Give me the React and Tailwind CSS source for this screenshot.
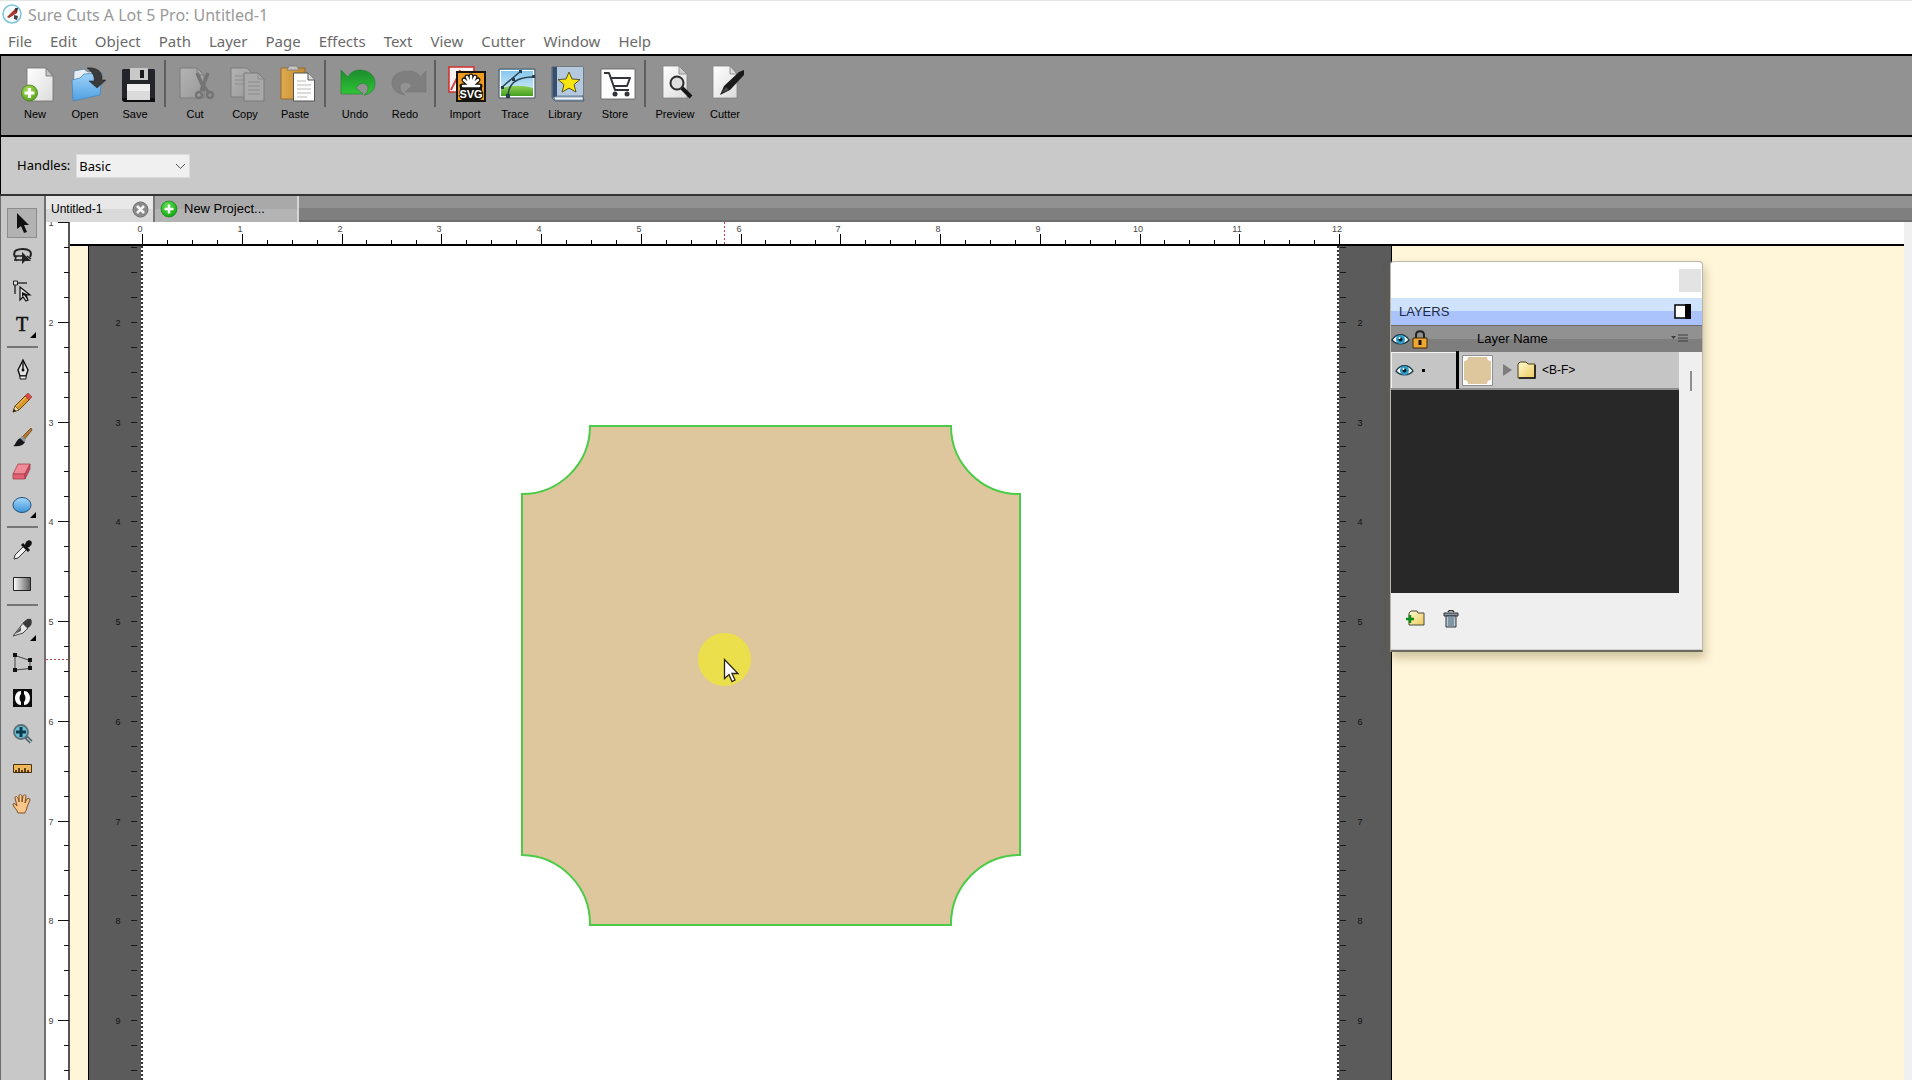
const menus = ["File", "Edit", "Object", "Path", "Layer", "Page", "Effects", "Text", "View", "Cutter", "Window", "Help"];

// zoom level of the document: pixels for 12 inches
const PAGE_WIDTH = 1197;
const INCH = PAGE_WIDTH / 12;

const Gradients = () => (
  <svg width="0" height="0" className="absolute" aria-hidden="true">
    <defs>
      <linearGradient id="paper" x1="0" y1="0" x2="1" y2="1">
        <stop offset="0" stopColor="#ffffff" />
        <stop offset="1" stopColor="#dcdcdc" />
      </linearGradient>
      <linearGradient id="dim" x1="0" y1="0" x2="1" y2="1">
        <stop offset="0" stopColor="#b4b4b4" />
        <stop offset="1" stopColor="#989898" />
      </linearGradient>
      <linearGradient id="blueFolder" x1="0" y1="0" x2="0" y2="1">
        <stop offset="0" stopColor="#9fd2fa" />
        <stop offset="1" stopColor="#4f9fe2" />
      </linearGradient>
      <radialGradient id="green" cx="0.4" cy="0.3" r="0.8">
        <stop offset="0" stopColor="#a9dc5c" />
        <stop offset="1" stopColor="#4d9c14" />
      </radialGradient>
      <radialGradient id="brightGreen" cx="0.4" cy="0.3" r="0.8">
        <stop offset="0" stopColor="#5fe054" />
        <stop offset="1" stopColor="#0aa00a" />
      </radialGradient>
      <linearGradient id="undoGreen" x1="0" y1="0" x2="0" y2="1">
        <stop offset="0" stopColor="#1d8c2c" />
        <stop offset="1" stopColor="#2fc638" />
      </linearGradient>
      <linearGradient id="board" x1="0" y1="0" x2="1" y2="0">
        <stop offset="0" stopColor="#e0a94e" />
        <stop offset="1" stopColor="#c58a2e" />
      </linearGradient>
      <linearGradient id="sky" x1="0" y1="0" x2="0" y2="1">
        <stop offset="0" stopColor="#7fc4ee" />
        <stop offset="1" stopColor="#e4f5fb" />
      </linearGradient>
      <linearGradient id="grass" x1="0" y1="0" x2="0" y2="1">
        <stop offset="0" stopColor="#8fd052" />
        <stop offset="1" stopColor="#3a9a1c" />
      </linearGradient>
      <linearGradient id="fade" x1="0" y1="0" x2="1" y2="0">
        <stop offset="0" stopColor="#ffffff" />
        <stop offset="1" stopColor="#5a5a5a" />
      </linearGradient>
      <linearGradient id="ball" x1="0" y1="0" x2="0" y2="1">
        <stop offset="0" stopColor="#a5d8fb" />
        <stop offset="1" stopColor="#3c93d8" />
      </linearGradient>
      <linearGradient id="yellowFolder" x1="0" y1="0" x2="1" y2="1">
        <stop offset="0" stopColor="#fffbd0" />
        <stop offset="1" stopColor="#ecc95c" />
      </linearGradient>
    </defs>
  </svg>
);

const icons = {
  New: (
    <>
      <path d="M12 4h19l7 8v25H12z" fill="url(#paper)" stroke="#6f6f6f" strokeWidth="0.8" />
      <path d="M31 4l7 8h-7z" fill="#c4c4c4" stroke="#6f6f6f" strokeWidth="0.8" />
      <circle cx="14.5" cy="29" r="8" fill="url(#green)" stroke="#4b7f1d" strokeWidth="0.8" />
      <path d="M14.5 24v10M9.5 29h10" stroke="#fff" strokeWidth="3.2" />
    </>
  ),
  Open: (
    <>
      <path d="M9 7l10-2 4 3 12-1v18l-27 9z" fill="#e6edf3" stroke="#5b7d99" strokeWidth="0.8" />
      <path d="M7 16l8-2 4-4 18-1-2 22-27 6z" fill="url(#blueFolder)" stroke="#4a86b8" strokeWidth="0.8" />
      <path d="M22 4c9-1 16 3 15 12h4l-9 8-8-7h5c1-5-2-9-7-13z" fill="#3a3a3a" stroke="#222" strokeWidth="0.5" />
    </>
  ),
  Save: (
    <>
      <path d="M8 5h31l1 1v32H9l-2-2V6z" fill="#23252a" />
      <path d="M7 34h33v4H9l-2-2z" fill="#0e0e10" />
      <path d="M15 4h18v12H15z" fill="#c9c9c9" />
      <path d="M25 6h4v8h-4z" fill="#1c1c1e" />
      <path d="M12 20h23v16H12z" fill="#eeeeef" />
      <path d="M12 27h23v9H12z" fill="#dadadb" />
    </>
  ),
  Cut: (
    <>
      <path d="M5 4h17l7 7v23H5z" fill="url(#dim)" stroke="#7c7c7c" />
      <path d="M22 4v7h7" fill="none" stroke="#7c7c7c" />
      <path d="M22 9l8 18M33 9l-7 18" stroke="#747474" strokeWidth="3.5" />
      <circle cx="24" cy="31" r="3" fill="none" stroke="#747474" strokeWidth="2.5" />
      <circle cx="35" cy="31" r="3" fill="none" stroke="#747474" strokeWidth="2.5" />
      <path d="M29 22l5 7" stroke="#747474" strokeWidth="3" />
    </>
  ),
  Copy: (
    <>
      <path d="M6 4h16l6 6v23H6z" fill="url(#dim)" stroke="#7c7c7c" />
      <path d="M10 12h12M10 16h12M10 20h9" stroke="#8e8e8e" />
      <path d="M19 9h14l6 6v22H19z" fill="#a9a9a9" stroke="#7a7a7a" />
      <path d="M33 9v6h6M23 18h12M23 22h12M23 26h12M23 30h12" fill="none" stroke="#8a8a8a" />
    </>
  ),
  Paste: (
    <>
      <path d="M6 4h24v31H6z" fill="url(#board)" stroke="#8d6220" strokeWidth="0.8" />
      <path d="M12 6l2-4h8l2 4z" fill="#c5c5c5" stroke="#777" strokeWidth="0.8" />
      <path d="M18.5 9H33l6.500 7v21h-21z" fill="#fdfdfd" stroke="#555" />
      <path d="M33 9v7h6.500" fill="#ddd" stroke="#555" />
      <path d="M22 17h9M22 21h14M22 25h14M22 29h14M22 33h10" stroke="#b9b9b9" />
    </>
  ),
  Undo: (
    <path
      d="M6 6v24h22l-7-6c4-7 12-5 12 0 0 3-1 5-4 7 7-1 11-5 11-12 0-8-7-13-15-13-6 0-10 3-12 7z"
      fill="url(#undoGreen)"
      stroke="#1e7d2a"
      strokeWidth="0.6"
    />
  ),
  Redo: (
    <path
      d="M41 7v21H20l7-6c-4-6-12-4-12 1 0 3 2 6 5 8-7-1-13-5-13-12 0-8 7-12 16-12 6 0 10 2 12 6z"
      fill="#7f7f7f"
      stroke="#767676"
      strokeWidth="0.6"
    />
  ),
  Import: (
    <>
      <path d="M4 3h25v25H4z" fill="#f8f4f4" stroke="#cf2f2f" strokeWidth="1.5" />
      <path d="M6 26c3-7 7-12 9-20" fill="none" stroke="#d04040" strokeWidth="2" />
      <path d="M12 8h28v29H12z" fill="#f09a1e" stroke="#15130f" strokeWidth="2" />
      <g stroke="#15130f" strokeWidth="5" strokeLinecap="round">
        <path d="M26 22V12M26 22l-4-9M26 22l4-9M26 22l-7-6M26 22l7-6M26 22h-9M26 22h9" />
      </g>
      <rect x="15" y="22" width="22" height="14" rx="3" fill="#15130f" />
      <g stroke="#fff" strokeWidth="2.5" strokeLinecap="round">
        <path d="M26 22V12M26 22l-4-9M26 22l4-9M26 22l-7-6M26 22l7-6M26 22h-8M26 22h8" />
      </g>
      <text x="26" y="34" textAnchor="middle" fontSize="11" fontWeight="700" fill="#fff" stroke="#15130f" strokeWidth="2" paintOrder="stroke">SVG</text>
    </>
  ),
  Trace: (
    <>
      <path d="M4 5h36v29H4z" fill="url(#sky)" stroke="#4c5960" />
      <path d="M5.500 25c8-4 20-4 33-1v9h-33z" fill="url(#grass)" />
      <path d="M5.500 6.500h33v26h-33z" fill="none" stroke="#fff" />
      <path d="M13 33c0-11 6-20 25-20M6 24L26 7" fill="none" stroke="#2c4450" strokeWidth="1.500" />
      <path d="M11 30h4v4h-4zM17 14h3v3h-3zM24 6h3v3h-3zM37 11h3v3h-3zM6 22h3v3H6z" fill="#24404e" />
    </>
  ),
  Library: (
    <>
      <path d="M8 3h30v30l1 4H10l-3-3V3z" fill="#8aa6c0" stroke="#41556a" strokeWidth="0.8" />
      <path d="M12 3h26v28H12z" fill="#b4c9dd" />
      <path d="M7.500 3H12v29l-4.500 2z" fill="#38506b" />
      <path d="M9 33h29v3H10z" fill="#f2f5f8" stroke="#52677c" strokeWidth="0.6" />
      <path d="M24 8l3 7 8 .6-6 5 2 7.500-7-4-7 4 2-7.500-6-5 8-.6z" fill="#f9e610" stroke="#5a5420" />
    </>
  ),
  Store: (
    <>
      <path d="M6 5h34v30H6z" fill="#fdfdfd" stroke="#5d5d5d" strokeWidth="0.8" />
      <path d="M9 9h5l6 17h14M16 14h19l-3 8H18" fill="none" stroke="#33333c" strokeWidth="2" strokeLinejoin="round" />
      <circle cx="20" cy="30" r="2.5" fill="#33333c" />
      <circle cx="32" cy="30" r="2.5" fill="#33333c" />
    </>
  ),
  Preview: (
    <>
      <path d="M8 2h16l8 8v24H8z" fill="url(#paper)" stroke="#808080" strokeWidth="0.8" />
      <path d="M24 2l8 8h-8z" fill="#ccc" stroke="#808080" strokeWidth="0.8" />
      <circle cx="22" cy="19" r="6.500" fill="#dedede" stroke="#2b2b2b" strokeWidth="2" />
      <path d="M27 24l9 9" stroke="#161616" strokeWidth="4" />
    </>
  ),
  Cutter: (
    <>
      <path d="M8 2h17l7 8v24H8z" fill="url(#paper)" stroke="#808080" strokeWidth="0.8" />
      <path d="M25 2l7 8h-7z" fill="#ddd" stroke="#808080" strokeWidth="0.8" />
      <path d="M15 31l4-9L34 8l5-2v5L25 26z" fill="#1b1b1b" />
      <path d="M16 29l5-6 3 3z" fill="#4a4a4a" />
    </>
  ),
};

const toolbarGroups = [
  ["New", "Open", "Save"],
  ["Cut", "Copy", "Paste"],
  ["Undo", "Redo"],
  ["Import", "Trace", "Library", "Store"],
  ["Preview", "Cutter"],
];

const Corner = () => <path d="M29 22v6h-6z" fill="#000" />;

const toolGroups = [
  {
    size: "h-[34px]",
    tools: [
      { name: "Select", icon: <path d="M10 5v16l4-3 3 7 3-1-3-7h5z" fill="#111" /> },
      {
        name: "Lasso",
        icon: (
          <>
            <path d="M8 15c-3-7 3-8 8-8s10 2 7 8" fill="none" stroke="#222" strokeWidth="2" />
            <path d="M7 14h9M7 18h8M10 14c-2 1-2 3 0 5M20 14l4 3" fill="none" stroke="#222" strokeWidth="1.500" />
            <path d="M15 10v12l3-3h6z" fill="#222" />
          </>
        ),
      },
      {
        name: "Node edit",
        icon: (
          <>
            <path d="M9 7h11M8 8v10" stroke="#333" strokeWidth="1.5" />
            <path d="M6.500 5h4v4h-4z" fill="#ddd" stroke="#222" />
            <path d="M13 11v13l3-3 3 4 2-1-2-5h4z" fill="#ddd" stroke="#111" strokeWidth="1.200" />
            <path d="M15 16v5l2-2 3 4v-4h2z" fill="#111" />
          </>
        ),
      },
      {
        name: "Text",
        icon: (
          <>
            <text x="15" y="21" textAnchor="middle" fontFamily="Liberation Serif, serif" fontSize="20" fill="#111" stroke="#111" strokeWidth="0.500">T</text>
            <Corner />
          </>
        ),
      },
    ],
  },
  {
    size: "h-[34px]",
    tools: [
      {
        name: "Pen",
        icon: (
          <>
            <path d="M16 6l5 10-2 6h-6l-2-6z" fill="#e4e4e4" stroke="#111" strokeWidth="1.400" />
            <path d="M16 7v9" stroke="#111" strokeWidth="1.400" />
            <circle cx="16" cy="16" r="1.500" fill="#111" />
            <path d="M13 22h6v3h-6z" fill="#eee" stroke="#111" />
          </>
        ),
      },
      {
        name: "Pencil",
        icon: (
          <>
            <path d="M6 24l2-6L19 7l4 4-11 11z" fill="#d9962a" stroke="#6b4a12" />
            <path d="M6 24l2-6 4 4z" fill="#f3dcae" stroke="#4a3410" strokeWidth="0.600" />
            <path d="M6 24l1-3 2 2z" fill="#111" />
            <path d="M18 8l3-3 4 4-3 3z" fill="#dc4a4a" stroke="#8a3030" strokeWidth="0.600" />
            <path d="M9 19L19 9" stroke="#f4c565" />
          </>
        ),
      },
      {
        name: "Brush",
        icon: (
          <>
            <path d="M15 15l9-9 1 2-8 10z" fill="#b8762c" stroke="#5c3a12" strokeWidth="0.700" />
            <path d="M6 24c3-1 3-7 8-8l4 4c-2 4-7 5-12 4z" fill="#17171a" />
            <path d="M13 16l2-2 4 4-2 2z" fill="#8f9aa5" />
          </>
        ),
      },
      {
        name: "Eraser",
        icon: (
          <>
            <path d="M6 18l5-10h12l-5 10z" fill="#ef8a96" stroke="#a3404e" strokeWidth="0.800" />
            <path d="M6 18h12v5H6z" fill="#e2606f" stroke="#a3404e" strokeWidth="0.800" />
            <path d="M18 18l5-10v5l-5 10z" fill="#cc4a5a" stroke="#a3404e" strokeWidth="0.800" />
          </>
        ),
      },
      {
        name: "Shape",
        icon: (
          <>
            <ellipse cx="15" cy="15" rx="9" ry="7.500" fill="url(#ball)" stroke="#24527c" />
            <Corner />
          </>
        ),
      },
    ],
  },
  {
    size: "h-[34px]",
    tools: [
      {
        name: "Eyedropper",
        icon: (
          <>
            <path d="M7 25l1-4 9-9 3 3-9 9z" fill="#f2f2f2" stroke="#333" />
            <path d="M15 10l7 7" stroke="#111" strokeWidth="3" />
            <path d="M18 12c0-5 4-7 6-5s0 6-4 7z" fill="#111" />
          </>
        ),
      },
      { name: "Gradient", icon: <path d="M6.500 9.500h17v13h-17z" fill="url(#fade)" stroke="#222" /> },
    ],
  },
  {
    size: "h-[35px]",
    tools: [
      {
        name: "Knife",
        icon: (
          <>
            <path d="M6 23L17 9l4 6-5 5z" fill="#e6e6e6" stroke="#444" />
            <path d="M16 11c1-4 5-6 8-5 2 4 0 8-4 9z" fill="#3a3a3a" />
            <path d="M8 21l6-7v4z" fill="#555" />
            <Corner />
          </>
        ),
      },
      {
        name: "Distort",
        icon: (
          <>
            <path d="M8 7.500l15 5v8L8 22z" fill="none" stroke="#444" />
            <path d="M6 5h4v4H6zM21 10h4v4h-4zM21 18h4v4h-4zM6 20h4v4H6z" fill="#111" />
          </>
        ),
      },
      {
        name: "Mask",
        icon: (
          <>
            <path d="M6 6h19v18H6z" fill="#0c0c0c" />
            <path d="M14 8c-8 0-8 14 0 14v-3c-2-2-2-6 0-8zM17 8c8 0 8 14 0 14v-3c2-2 2-6 0-8z" fill="#fff" />
          </>
        ),
      },
      {
        name: "Zoom",
        icon: (
          <>
            <path d="M19 19l5 5" stroke="#4a5a64" strokeWidth="4" />
            <path d="M20 20l4 4" stroke="#a8bac4" strokeWidth="1.500" />
            <circle cx="14" cy="14" r="7" fill="#6cc0d8" stroke="#5b7078" strokeWidth="1.800" />
            <path d="M14 9v10M9 14h10" stroke="#0b3b4a" strokeWidth="3" />
          </>
        ),
      },
      {
        name: "Measure",
        icon: (
          <>
            <path d="M6.500 11.500h18v8h-18z" fill="#f0b75a" stroke="#4a3210" />
            <path d="M9 20v-3M12 20v-5M15 20v-3M18 20v-5M21 20v-3" stroke="#2c1d08" strokeWidth="1.500" />
          </>
        ),
      },
      {
        name: "Pan",
        icon: (
          <path
            d="M11 25c-1-4-5-6-5-9 1-1 3 0 4 2L8 10c0-2 2-2 3 0l1 4V8c0-2 2-2 3 0v6l1-6c1-2 3-1 3 0l-1 7 2-4c1-1 3-1 3 1l-3 7c0 3-2 4-2 6z"
            fill="#fcc58a"
            stroke="#7a5228"
          />
        ),
      },
    ],
  },
];

const TitleBar = () => (
  <header className="flex h-7 items-center gap-[5px] border-t border-[#e4e4e4] bg-white pl-0.5">
    <svg width="21" height="21" viewBox="0 0 21 21" aria-hidden="true">
      <circle cx="10" cy="10" r="9" fill="#f6fbfd" stroke="#7cc4dc" strokeWidth="1.500" />
      <path d="M5 13l8-8 3-1-1 5-8 5z" fill="#a8372c" />
      <path d="M13 4l3 0-2 5z" fill="#333" />
      <path d="M12 11l4 1-1 4-3-1z" fill="#444" />
    </svg>
    <h1 className="text-base leading-5 text-[#999]">Sure Cuts A Lot 5 Pro: Untitled-1</h1>
  </header>
);

const MenuBar = () => (
  <nav className="flex h-[26px] items-center gap-[18px] bg-white pl-2">
    {menus.map((m) => (
      <button key={m} type="button" className="text-[15px] leading-5 text-[#6a6a6a]">
        {m}
      </button>
    ))}
  </nav>
);

const Toolbar = () => (
  <div className="flex h-[83px] items-start border-y-2 border-l border-black bg-[#929292] pl-[9px] font-['Liberation_Sans',sans-serif]">
    {toolbarGroups.map((group, i) => (
      <div key={group[0]} className="flex">
        {i > 0 && <div className="mx-1 mt-1 h-[47px] w-0.5 bg-[#5e5e5e]" />}
        {group.map((name) => (
          <button key={name} type="button" className="flex w-[50px] flex-col items-center gap-[3px] pt-2">
            <svg width="40" height="40" viewBox="0 0 40 40" className="overflow-visible" aria-hidden="true">
              {icons[name]}
            </svg>
            <span className="text-[11px] leading-[14px] text-black">{name}</span>
          </button>
        ))}
      </div>
    ))}
  </div>
);

const OptionsBar = () => (
  <div className="flex h-[57px] items-center gap-[6px] border-l border-black bg-[#c9c9c9] pl-4 text-[13px]">
    <label htmlFor="handles" className="text-black">Handles:</label>
    <div className="relative">
      <select id="handles" className="block h-6 w-[114px] appearance-none border border-[#dcdcdc] bg-[#f0f0f0] pl-0.5 leading-5 text-black">
        <option>Basic</option>
      </select>
      <svg width="11" height="7" viewBox="0 0 11 7" className="pointer-events-none absolute top-[9px] right-1" aria-hidden="true">
        <path d="M1 1l4.500 4.500L10 1" fill="none" stroke="#555" />
      </svg>
    </div>
  </div>
);

const ToolPalette = () => (
  <aside className="w-[46px] shrink-0 border-r-2 border-l border-[#6f6f6f] bg-[#c8c8c8] pt-[10px] pl-[6px]">
    {toolGroups.map((group, i) => (
      <div key={i} className="flex flex-col items-start">
        {i > 0 && <div className="my-1 h-0.5 w-[31px] bg-[#767676]" />}
        {group.tools.map((tool) => (
          <div key={tool.name} className={`flex items-center ${group.size}`}>
            <button
              type="button"
              aria-label={tool.name}
              className={`size-[30px] ${tool.name === "Select" ? "bg-[#b2b2b2] outline -outline-offset-1 outline-[#8c8c8c]" : ""}`}
            >
              <svg width="30" height="30" viewBox="0 0 30 30" aria-hidden="true">
                {tool.icon}
              </svg>
            </button>
          </div>
        ))}
      </div>
    ))}
  </aside>
);

const Tabs = () => (
  <div className="flex h-[26px] shrink-0 border-b-2 border-[#6e6e6e] bg-linear-to-b from-[#919191] from-50% to-[#7f7f7f] to-50% font-['Liberation_Sans',sans-serif] text-black">
    <div className="flex h-[26px] w-[107px] items-center justify-between bg-linear-to-b from-[#e8e8e8] from-50% to-[#d9d9d9] to-50% pr-1 pl-[5px]">
      <button type="button" className="text-xs">Untitled-1</button>
      <button type="button" aria-label="Close tab">
        <svg width="17" height="17" viewBox="0 0 17 17">
          <circle cx="8.500" cy="8.500" r="7.500" fill="#8b8b8b" stroke="#6e6e6e" />
          <path d="M5 5l7 7M12 5l-7 7" stroke="#f4f4f4" strokeWidth="2.500" />
        </svg>
      </button>
    </div>
    <button type="button" className="flex h-[26px] w-[146px] items-center gap-[6px] border-r-2 border-l-2 border-r-[#d5d5d5] border-l-[#777] bg-linear-to-b from-[#a9a9a9] from-50% to-[#b4b4b4] to-50% pl-[5px] text-[13px]">
      <svg width="18" height="18" viewBox="0 0 18 18" aria-hidden="true">
        <circle cx="9" cy="9" r="8" fill="url(#brightGreen)" stroke="#0c7a0c" strokeWidth="0.600" />
        <path d="M9 4.500v9M4.500 9h9" stroke="#fff" strokeWidth="2.500" />
      </svg>
      New Project...
    </button>
  </div>
);

const HorizontalRuler = () => (
  <svg width="100%" height="24" className="block shrink-0 border-b-2 border-black bg-white" shapeRendering="crispEdges" aria-hidden="true">
    {Array.from({ length: 49 }, (_, i) => {
      const x = Math.round(72 + (i * INCH) / 4);
      return <path key={i} d={`M${x} ${i % 4 ? 18 : 12}h1V24h-1z`} fill="#000" />;
    })}
    {Array.from({ length: 13 }, (_, n) => (
      <text key={n} x={Math.round(70 + n * INCH)} y="10" textAnchor="middle" fontSize="9" fill="#444">
        {n}
      </text>
    ))}
    <path d="M654.500 0v24" stroke="#d8384c" strokeDasharray="2 2" />
  </svg>
);

// ticks start at 1 inch, the first visible mark below the tab strip
const VerticalRuler = () => (
  <svg width="24" height="100%" className="block shrink-0 bg-white" shapeRendering="crispEdges" aria-hidden="true">
    <path d="M22 0h2v3000h-2z" fill="#555" />
    {Array.from({ length: 60 }, (_, i) => {
      const y = Math.round((i * INCH) / 4);
      return <path key={i} d={`M${i % 4 ? 18 : 12} ${y}H23v1H${i % 4 ? 18 : 12}z`} fill="#111" />;
    })}
    {Array.from({ length: 9 }, (_, n) => (
      <text key={n} x="5" y={Math.round(4 + n * INCH)} textAnchor="middle" fontSize="9" fill="#444">
        {n + 1}
      </text>
    ))}
    <path d="M0 437.500h22" stroke="#c0404c" strokeDasharray="2 2" />
  </svg>
);

const Margin = ({ side }) => (
  <svg width="52" height="100%" className="block shrink-0 bg-[#5b5b5b]" shapeRendering="crispEdges" aria-hidden="true">
    {Array.from({ length: 59 }, (_, i) => {
      const y = Math.round(((i + 1) * INCH) / 4) - 24;
      return <path key={i} d={`M${side === "left" ? 42 : 1} ${y}h6v1h-6z`} fill="#1a1a1a" />;
    })}
    {Array.from({ length: 8 }, (_, n) => (
      <text key={n} x={side === "left" ? 29 : 21} y={Math.round((n + 1) * INCH) - 20} textAnchor="middle" fontSize="9" fill="#111">
        {n + 2}
      </text>
    ))}
  </svg>
);

const Page = () => (
  <div className="relative shrink-0 border-x-2 border-dotted border-[#333] bg-white" style={{ width: PAGE_WIDTH + 1 }}>
    <svg width="501" height="501" viewBox="0 0 501 501" className="absolute top-[179px] left-[378px]" role="img" aria-label="Plaque shape">
      <path
        d="M69 1h361a68 68 0 0 0 69 68v361a69 69 0 0 0-69 70H69a69 69 0 0 0-68-70V69a68 68 0 0 0 68-68z"
        fill="#dfc79d"
        stroke="#4ccb48"
        strokeWidth="2"
      />
    </svg>
    <div className="absolute top-[387px] left-[555px] size-[53px] rounded-full bg-[#ebe04c]" />
    <svg width="18" height="26" viewBox="0 0 18 26" className="absolute top-[412px] left-[580px]" aria-hidden="true">
      <path d="M1.500 1.500v19l4.500-4 3 7 3-1.500-3-6.500h6z" fill="#fff" stroke="#2a2410" strokeWidth="1.300" />
    </svg>
  </div>
);

const Eye = () => (
  <svg width="19" height="13" viewBox="0 0 19 13" role="img" aria-label="Visible">
    <path d="M1 7c4-7 13-7 17 0-4 5-13 5-17 0z" fill="#f4f8fa" stroke="#1d3a48" strokeWidth="1.300" />
    <circle cx="9.500" cy="6.500" r="4.500" fill="#2c9cc8" />
    <circle cx="9.500" cy="6.500" r="2" fill="#0c1c24" />
    <circle cx="8.500" cy="5" r="1" fill="#fff" />
  </svg>
);

const LayersPanel = () => (
  <section className="absolute top-[15px] right-[201px] w-[313px] rounded-t-sm border border-b-2 border-[#b9b6aa] border-b-[#6d6a62] bg-[#efefef] font-['Liberation_Sans',sans-serif] text-black shadow-[2px_6px_10px_rgba(120,100,50,0.35)]">
    <div className="flex h-9 items-center justify-end rounded-t-sm bg-white pr-px">
      <button type="button" aria-label="Close panel" className="h-[23px] w-[22px] bg-[#e3e3e3]" />
    </div>
    <div className="flex h-[27px] items-center justify-between bg-linear-to-b from-[#cfe3fc] from-50% to-[#abc3fd] to-50% pr-[10px] pl-2">
      <h2 className="text-[13px] leading-5 text-[#1c2a44]">LAYERS</h2>
      <svg width="18" height="16" viewBox="0 0 18 16" aria-hidden="true">
        <path d="M1 1h15v13H1z" fill="#fff" stroke="#000" strokeWidth="1.500" />
        <path d="M11 0h6v15h-6z" fill="#000" />
      </svg>
    </div>
    <div className="flex h-[27px] items-center border-t border-[#6c6c6c] bg-linear-to-b from-[#919191] from-50% to-[#7e7e7e] to-50%">
      <div className="flex w-[86px] items-center gap-0.5">
        <Eye />
        <svg width="16" height="19" viewBox="0 0 16 19" role="img" aria-label="Locked">
          <path d="M4 9V5c0-5 8-5 8 0v4" fill="none" stroke="#222" strokeWidth="2" />
          <path d="M1 8h14v10H1z" fill="#f0a830" stroke="#3a2808" />
          <path d="M8 10v5" stroke="#1a1206" strokeWidth="3" />
        </svg>
      </div>
      <h3 className="flex-1 text-[13px] leading-5">Layer Name</h3>
      <button type="button" aria-label="Panel menu" className="pr-[14px]">
        <svg width="17" height="10" viewBox="0 0 17 10">
          <path d="M0 2h5L2.500 5z" fill="#3c3c3c" />
          <path d="M7 1h10M7 4h10M7 7h10" stroke="#3c3c3c" />
        </svg>
      </button>
    </div>
    <div className="flex h-[241px]">
      <ul className="flex-1 bg-[#282828]">
        <li className="flex h-[38px] items-center border-b-2 border-[#8d8d8d] bg-[#c5c5c5]">
          <span className="flex h-full w-[65px] items-center gap-2 border-t border-l border-[#f4f4f4] pl-[3px]">
            <Eye />
            <span className="size-[3px] bg-black" />
          </span>
          <span className="h-[38px] w-[3px] bg-black" />
          <svg width="31" height="31" viewBox="0 0 31 31" className="ml-[3px]" aria-hidden="true">
            <path d="M.5.5h30v30H.5z" fill="#fff" stroke="#8f8f8f" />
            <path d="M6 2h19q0 4 4 4v19q-4 0-4 4H6q0-4-4-4V6q4 0 4-4z" fill="#dfc79d" />
          </svg>
          <svg width="9" height="12" viewBox="0 0 9 12" className="ml-[10px]" aria-hidden="true">
            <path d="M0 0l9 6-9 6z" fill="#7d7d7d" />
          </svg>
          <svg width="20" height="18" viewBox="0 0 20 18" className="ml-[5px]" aria-hidden="true">
            <path d="M1 3l2-2h6l2 2h7v14H1z" fill="url(#yellowFolder)" stroke="#4a3f1c" />
            <path d="M18 4v13H2" fill="none" stroke="#111" strokeWidth="1.500" />
          </svg>
          <span className="ml-[5px] text-xs">&lt;B-F&gt;</span>
        </li>
      </ul>
      <div className="flex w-[23px] justify-center pt-[19px]">
        <span className="h-5 w-0.5 bg-[#8e8e8e]" />
      </div>
    </div>
    <footer className="flex h-[57px] gap-[18px] border-b border-[#d2d2d2] pt-[17px] pl-[15px]">
      <button type="button" aria-label="New layer" className="h-[18px]">
        <svg width="19" height="18" viewBox="0 0 19 18">
          <path d="M3 3l2-2h6l1 2h6v12H3z" fill="url(#yellowFolder)" stroke="#4a4a3c" />
          <path d="M4 5v8M0 9h8" stroke="#0b8a14" strokeWidth="2.500" />
        </svg>
      </button>
      <button type="button" aria-label="Delete layer" className="h-[18px]">
        <svg width="16" height="18" viewBox="0 0 16 18">
          <path d="M5 2c1-2 5-2 6 0" fill="none" stroke="#333" strokeWidth="1.500" />
          <path d="M1 3h14v3H1z" fill="#8a96a0" stroke="#2e3338" />
          <path d="M3 6h10v11H3z" fill="#b7c9d4" stroke="#2e3338" />
          <path d="M6 7v9M8 7v9M10 7v9" stroke="#4f6472" />
        </svg>
      </button>
    </footer>
  </section>
);

export default function App() {
  return (
    <div className="flex h-screen flex-col overflow-hidden bg-white font-['Noto_Sans','Open_Sans',sans-serif]">
      <Gradients />
      <TitleBar />
      <MenuBar />
      <Toolbar />
      <OptionsBar />

      {/* Workspace */}
      <div className="flex min-h-0 flex-1 border-t-2 border-[#333]">
        <ToolPalette />
        <main className="flex min-w-0 flex-1 flex-col font-['Liberation_Sans',sans-serif]">
          <Tabs />
          <div className="flex min-h-0 flex-1">
            <VerticalRuler />
            <div className="flex min-w-0 flex-1 flex-col">
              <HorizontalRuler />
              <div className="relative flex min-h-0 flex-1 bg-[#fff5d9]">
                <div className="w-[18px] shrink-0" />
                <div className="w-px shrink-0 bg-black" />
                <Margin side="left" />
                <Page />
                <Margin side="right" />
                <div className="w-px shrink-0 bg-black" />
                <LayersPanel />
              </div>
            </div>
            <div className="w-2 shrink-0 bg-[#f0f0f0]" />
          </div>
        </main>
      </div>
    </div>
  );
}
